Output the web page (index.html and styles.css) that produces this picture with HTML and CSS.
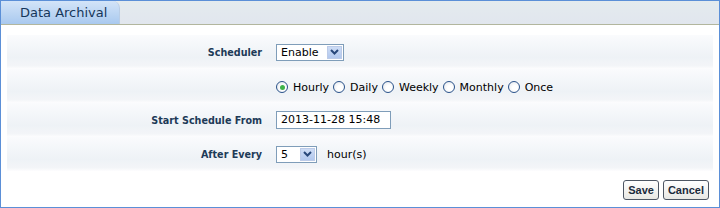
FILE: index.html
```html
<!DOCTYPE html>
<html lang="en">
<head>
    <meta charset="UTF-8">
    <title>Data Archival</title>
    <link rel="stylesheet" href="styles.css">
</head>
<body>
    <div class="panel">
        <div class="tab-bar">
            <div class="tab">Data Archival</div>
        </div>
        <div class="panel-body">
            <div class="form-row">
                <div class="label">Scheduler</div>
                <div class="field">
                    <span class="select select-wide">
                        <span class="select-text">Enable</span>
                        <span class="select-btn"><svg width="9" height="6" viewBox="0 0 9 6"><path d="M1 1 L4.5 4.5 L8 1" fill="none" stroke="#27477a" stroke-width="2"/></svg></span>
                    </span>
                </div>
            </div>
            <div class="form-row">
                <div class="label"></div>
                <div class="field radios">
                    <label class="radio"><span class="dot checked"></span>Hourly</label>
                    <label class="radio"><span class="dot"></span>Daily</label>
                    <label class="radio"><span class="dot"></span>Weekly</label>
                    <label class="radio"><span class="dot"></span>Monthly</label>
                    <label class="radio"><span class="dot"></span>Once</label>
                </div>
            </div>
            <div class="form-row">
                <div class="label">Start Schedule From</div>
                <div class="field">
                    <span class="text-input">2013-11-28 15:48</span>
                </div>
            </div>
            <div class="form-row">
                <div class="label">After Every</div>
                <div class="field">
                    <span class="select select-small">
                        <span class="select-text">5</span>
                        <span class="select-btn"><svg width="9" height="6" viewBox="0 0 9 6"><path d="M1 1 L4.5 4.5 L8 1" fill="none" stroke="#27477a" stroke-width="2"/></svg></span>
                    </span>
                    <span class="unit">hour(s)</span>
                </div>
            </div>
            <div class="actions">
                <button class="btn">Save</button>
                <button class="btn">Cancel</button>
            </div>
        </div>
    </div>
</body>
</html>
```

FILE: styles.css
```css
* {
    margin: 0;
    padding: 0;
    box-sizing: border-box;
}

body {
    font-family: 'DejaVu Sans', Verdana, sans-serif;
    font-size: 11px;
    color: #000;
    background: #fff;
}

.panel {
    width: 720px;
    height: 208px;
    border: 1px solid #5b8fd7;
    display: flex;
    flex-direction: column;
}

.tab-bar {
    height: 24px;
    background: linear-gradient(#e4ebee, #e1e6ee);
    border-bottom: 1px solid #b2b69e;
    display: flex;
}

.tab {
    width: 119px;
    height: 23px;
    padding-left: 19px;
    line-height: 23px;
    font-size: 13px;
    color: #15365a;
    background: linear-gradient(#d3e4f8, #a9c9ef);
    border-top-right-radius: 7px;
    border-right: 1px solid #b9cde6;
}

.panel-body {
    flex: 1;
    padding: 10px 6px 0 6px;
    display: flex;
    flex-direction: column;
}

.form-row {
    height: 34px;
    display: flex;
    align-items: center;
    background: linear-gradient(#fafbfd 0%, #eef2f6 65%, #f3f5f8 90%, #fdfdfe 100%);
}

.label {
    width: 256px;
    text-align: right;
    font-weight: bold;
    font-size: 9.6px;
    color: #1d3a57;
    padding-right: 1px;
}

.field {
    margin-left: 13px;
    display: flex;
    align-items: center;
}

.select {
    display: inline-flex;
    align-items: center;
    height: 17px;
    border: 1px solid #7f9db9;
    background: #fff;
    padding: 1px;
}

.select-wide {
    width: 68px;
}

.select-small {
    width: 41px;
}

.select-text {
    flex: 1;
    padding-left: 3px;
    line-height: 13px;
}

.select-btn {
    width: 15px;
    height: 13px;
    background: linear-gradient(#cddcf5, #b2c8ee);
    border: 1px solid #bccbe8;
    display: flex;
    align-items: center;
    justify-content: center;
}

.radios {
    gap: 4px;
    padding-top: 2px;
}

.radio {
    display: inline-flex;
    align-items: center;
}

.dot {
    width: 12px;
    height: 12px;
    border-radius: 50%;
    border: 1px solid #2a528a;
    background: radial-gradient(circle at 60% 60%, #ffffff 30%, #dfe4ea 100%);
    margin-right: 5px;
    display: inline-flex;
    align-items: center;
    justify-content: center;
}

.dot.checked::after {
    content: '';
    width: 5px;
    height: 5px;
    border-radius: 50%;
    background: #3fb34a;
}

.text-input {
    width: 115px;
    height: 18px;
    border: 1px solid #7f9db9;
    background: #fff;
    padding-left: 4px;
    line-height: 16px;
}

.unit {
    margin-left: 10px;
}

.actions {
    display: flex;
    justify-content: flex-end;
    gap: 4px;
    padding: 9px 4px 0 0;
}

.btn {
    height: 20px;
    padding: 0 4px;
    font-family: 'Liberation Sans', Arial, sans-serif;
    font-size: 11px;
    font-weight: bold;
    color: #1b2a3b;
    border: 1px solid #4d5663;
    border-radius: 3px;
    background: linear-gradient(#ffffff, #e8e8e4);
}
```
